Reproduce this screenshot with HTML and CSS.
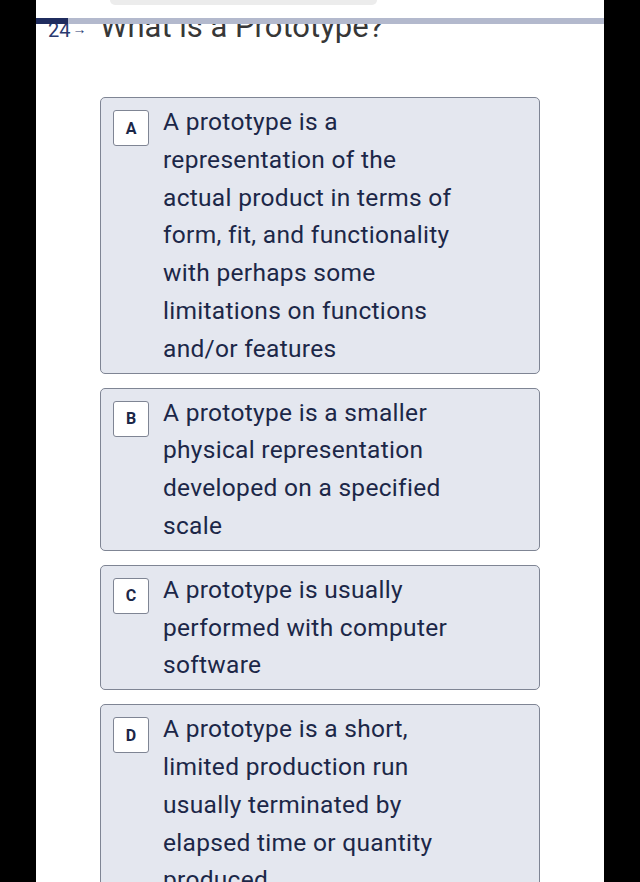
FILE: index.html
```html
<!DOCTYPE html>
<html lang="en">
<head>
<meta charset="utf-8">
<title>What is a Prototype?</title>
<link rel="stylesheet" href="styles.css">
</head>
<body>
<div class="screen">
  <div class="topbar"><div class="pill"></div></div>
  <div class="progress"><div class="progress-fill"></div></div>
  <div class="question">
    <span class="qnum">24<span class="arrow">→</span></span>
    <span class="qtitle">What is a Prototype?</span>
  </div>
  <div class="options">
    <div class="option">
      <div class="key">A</div>
      <div class="answer">A prototype is a representation of the actual product in terms of form, fit, and functionality with perhaps some limitations on functions and/or features</div>
    </div>
    <div class="option">
      <div class="key">B</div>
      <div class="answer">A prototype is a smaller physical representation developed on a specified scale</div>
    </div>
    <div class="option">
      <div class="key">C</div>
      <div class="answer">A prototype is usually performed with computer software</div>
    </div>
    <div class="option">
      <div class="key">D</div>
      <div class="answer">A prototype is a short, limited production run usually terminated by elapsed time or quantity produced</div>
    </div>
  </div>
</div>
</body>
</html>
```
FILE: styles.css
```css
html, body {
  margin: 0;
  padding: 0;
  background: #000;
}
body {
  font-family: Roboto, "Liberation Sans", sans-serif;
}
.screen {
  width: 568px;
  height: 882px;
  margin: 0 36px;
  background: #fff;
  overflow: hidden;
}
.topbar {
  position: relative;
  z-index: 2;
  height: 18px;
  background: #fff;
}
.pill {
  margin-left: 74px;
  width: 267px;
  height: 5px;
  background: #ececec;
  border-radius: 0 0 14px 14px;
}
.progress {
  position: relative;
  z-index: 2;
  height: 6px;
  background: #b3b9cd;
}
.progress-fill {
  width: 32px;
  height: 6px;
  background: #1f2c5e;
}
.question {
  margin-top: -15px;
  height: 36px;
  display: flex;
  align-items: baseline;
  padding-left: 12px;
}
.qnum {
  width: 52px;
  font-size: 20px;
  line-height: 36px;
  color: #2a3a70;
}
.arrow {
  display: inline-block;
  font-size: 14px;
  margin-left: 2px;
  vertical-align: 3px;
}
.qtitle {
  font-size: 31px;
  line-height: 36px;
  color: #373737;
}
.options {
  margin: 52px 64px 0;
  display: flex;
  flex-direction: column;
  gap: 14px;
}
.option {
  display: flex;
  align-items: flex-start;
  border: 1px solid #7f8594;
  border-radius: 5px;
  background: #e4e7ef;
  padding: 5px 0 5px 12px;
}
.key {
  flex: none;
  width: 34px;
  height: 34px;
  margin-top: 7px;
  border: 1px solid #7f8594;
  border-radius: 3px;
  background: #fff;
  display: flex;
  align-items: center;
  justify-content: center;
  font-weight: 700;
  font-size: 16px;
  color: #1c2748;
}
.answer {
  margin-left: 14px;
  width: 292px;
  font-size: 24.5px;
  letter-spacing: 0.3px;
  line-height: 37.8px;
  color: #1c2748;
}
```
